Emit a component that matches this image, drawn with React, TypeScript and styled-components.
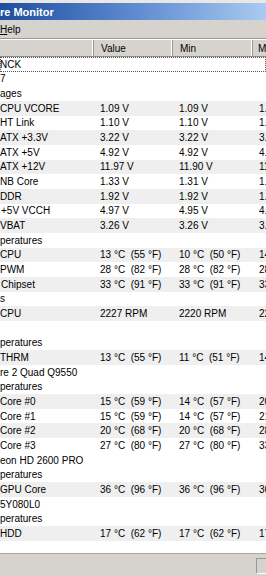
import styled, { createGlobalStyle } from "styled-components";

type Item = {
  name: string;
  value?: string;
  min?: string;
  max?: string;
  indent?: number;
};

const items: Item[] = [
  { name: "NCK" },
  { name: "7" },
  { name: "ages" },
  { name: "CPU VCORE", value: "1.09 V", min: "1.09 V", max: "1.10 V" },
  { name: "HT Link", value: "1.10 V", min: "1.10 V", max: "1.10 V" },
  { name: "ATX +3.3V", value: "3.22 V", min: "3.22 V", max: "3.23 V" },
  { name: "ATX +5V", value: "4.92 V", min: "4.92 V", max: "4.95 V" },
  { name: "ATX +12V", value: "11.97 V", min: "11.90 V", max: "11.97 V" },
  { name: "NB Core", value: "1.33 V", min: "1.31 V", max: "1.33 V" },
  { name: "DDR", value: "1.92 V", min: "1.92 V", max: "1.92 V" },
  { name: "+5V VCCH", value: "4.97 V", min: "4.95 V", max: "4.97 V", indent: 1 },
  { name: "VBAT", value: "3.26 V", min: "3.26 V", max: "3.26 V" },
  { name: "peratures" },
  { name: "CPU", value: "13 °C  (55 °F)", min: "10 °C  (50 °F)", max: "14 °C  (57 °F)" },
  { name: "PWM", value: "28 °C  (82 °F)", min: "28 °C  (82 °F)", max: "28 °C  (82 °F)" },
  { name: "Chipset", value: "33 °C  (91 °F)", min: "33 °C  (91 °F)", max: "33 °C  (91 °F)", indent: 1 },
  { name: "s" },
  { name: "CPU", value: "2227 RPM", min: "2220 RPM", max: "2250 RPM" },
  { name: "" },
  { name: "peratures" },
  { name: "THRM", value: "13 °C  (55 °F)", min: "11 °C  (51 °F)", max: "14 °C  (57 °F)" },
  { name: "re 2 Quad Q9550" },
  { name: "peratures" },
  { name: "Core #0", value: "15 °C  (59 °F)", min: "14 °C  (57 °F)", max: "20 °C  (68 °F)" },
  { name: "Core #1", value: "15 °C  (59 °F)", min: "14 °C  (57 °F)", max: "21 °C  (69 °F)" },
  { name: "Core #2", value: "20 °C  (68 °F)", min: "20 °C  (68 °F)", max: "28 °C  (82 °F)" },
  { name: "Core #3", value: "27 °C  (80 °F)", min: "27 °C  (80 °F)", max: "33 °C  (91 °F)" },
  { name: "eon HD 2600 PRO" },
  { name: "peratures" },
  { name: "GPU Core", value: "36 °C  (96 °F)", min: "36 °C  (96 °F)", max: "36 °C  (96 °F)" },
  { name: "5Y080L0" },
  { name: "peratures" },
  { name: "HDD", value: "17 °C  (62 °F)", min: "17 °C  (62 °F)", max: "17 °C  (62 °F)" },
];

// leaf rows alternate gray/white inside each group, starting with gray
function shading(list: Item[]) {
  let n = 0;
  return list.map((it) => {
    if (!it.value) {
      n = 0;
      return false;
    }
    n++;
    return n % 2 === 1;
  });
}

export default function App() {
  const shaded = shading(items);
  return (
    <>
      <GlobalStyle />
      <Window>
        <TopEdge />
        <TitleBar>re Monitor</TitleBar>
        <MenuBar>
          <MenuItem>
            <u>H</u>elp
          </MenuItem>
        </MenuBar>
        <Rule />
        <Header>
          <HeadCell />
          <HeadCell>Value</HeadCell>
          <HeadCell>Min</HeadCell>
          <HeadCell $last>Max</HeadCell>
        </Header>
        <List>
          {items.map((it, i) => (
            <Row key={i} $shaded={shaded[i]} $focus={i === 0}>
              <NameCell $indent={it.indent ?? 0}>{it.name}</NameCell>
              <Cell>{it.value}</Cell>
              <Cell>{it.min}</Cell>
              <Cell>{it.max}</Cell>
            </Row>
          ))}
        </List>
        <StatusBar>
          <StatusPanel />
        </StatusBar>
      </Window>
    </>
  );
}

const GlobalStyle = createGlobalStyle`
  html, body {
    margin: 0;
    padding: 0;
    background: #d4d0c8;
  }
  body {
    width: 266px;
    height: 576px;
    overflow: hidden;
    font-family: "Liberation Sans", Arial, sans-serif;
  }
`;

const Window = styled.div`
  width: 266px;
  height: 576px;
  display: flex;
  flex-direction: column;
  overflow: hidden;
  color: #000;
  font-size: 10px;
`;

const TopEdge = styled.div`
  height: 3px;
  background: #e9e8e4;
`;

const TitleBar = styled.div`
  height: 17px;
  display: flex;
  align-items: center;
  background: linear-gradient(to right, #1d4d9e, #5d8ad0 50%, #a9cbf1);
  color: #fff;
  font-weight: bold;
  font-size: 11px;
  white-space: nowrap;
`;

const MenuBar = styled.div`
  height: 18px;
  display: flex;
  align-items: center;
  background: #d6d3ce;
`;

const MenuItem = styled.span`
  font-size: 10px;
  u {
    text-decoration-thickness: 1px;
  }
`;

const Rule = styled.div`
  height: 0;
  border-top: 1px solid #9a9893;
  border-bottom: 1px solid #ffffff;
`;

const Header = styled.div`
  height: 17px;
  display: grid;
  grid-template-columns: 94px 79px 80px 1fr;
  background: #d6d3ce;
  border-bottom: 1px solid #8c8a85;
  box-sizing: border-box;
`;

const HeadCell = styled.div<{ $last?: boolean }>`
  display: flex;
  align-items: center;
  padding-left: ${(p) => (p.$last ? 5 : 7)}px;
  font-size: 10px;
  white-space: nowrap;
  overflow: hidden;
  border-right: ${(p) => (p.$last ? "none" : "1px solid #9a9893")};
  box-shadow: ${(p) => (p.$last ? "none" : "inset -1px 0 0 #ffffff")};
  box-sizing: border-box;
`;

const List = styled.div`
  flex: 1;
  background: #fff;
  display: flex;
  flex-direction: column;
`;

const Row = styled.div<{ $shaded: boolean; $focus: boolean }>`
  height: 14.66px;
  display: grid;
  grid-template-columns: 94px 79px 80px 1fr;
  align-items: center;
  background: ${(p) => (p.$shaded ? "#efefef" : "#ffffff")};
  outline: ${(p) => (p.$focus ? "1px dotted #555" : "none")};
  outline-offset: -1px;
  white-space: pre;
`;

const NameCell = styled.div<{ $indent: number }>`
  padding-left: ${(p) => p.$indent}px;
  overflow: hidden;
`;

const Cell = styled.div`
  padding-left: 6px;
  overflow: hidden;
`;

const StatusBar = styled.div`
  height: 23px;
  border-top: 1px solid #a9a7a2;
  background: #d6d3ce;
  display: flex;
  align-items: center;
  justify-content: flex-end;
  box-sizing: border-box;
`;

const StatusPanel = styled.div`
  width: 9px;
  height: 14px;
  border-top: 1px solid #9a9893;
  border-left: 1px solid #9a9893;
  border-bottom: 1px solid #fff;
  margin-top: 2px;
`;
